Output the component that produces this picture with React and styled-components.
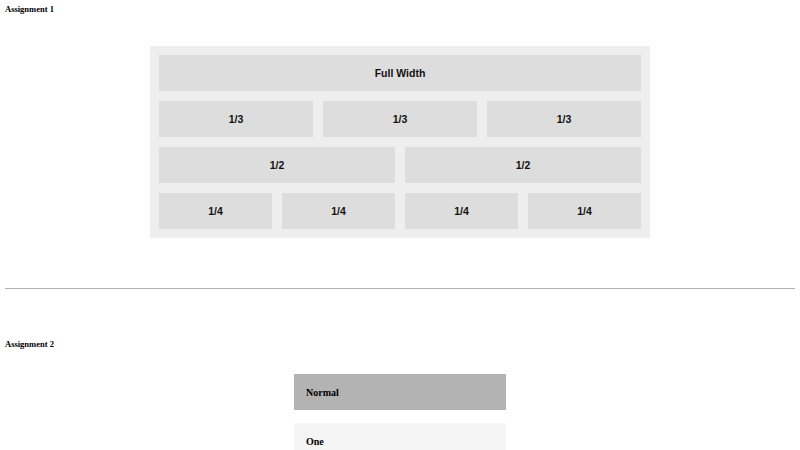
import React from 'react';
import styled, { createGlobalStyle } from 'styled-components';

const Global = createGlobalStyle`
  html, body {
    margin: 0;
    padding: 0;
    background: #fff;
    overflow: hidden;
  }
`;

const Page = styled.div`
  padding: 4px 5px 0;
  font-family: "Liberation Serif", "Times New Roman", serif;
`;

const Heading = styled.h3`
  margin: 0;
  font-size: 8.5px;
  line-height: 10px;
  font-weight: bold;
  color: #000;
`;

const Layout = styled.div`
  width: 500px;
  box-sizing: border-box;
  margin: 32px auto 0;
  padding: 9px;
  background: #eeeeee;
  display: grid;
  grid-template-columns: repeat(12, 1fr);
  gap: 10px;
`;

const Cell = styled.div`
  grid-column: span ${p => p.$span};
  height: 36px;
  background: #dddddd;
  display: flex;
  align-items: center;
  justify-content: center;
  font-family: "Liberation Sans", Arial, sans-serif;
  font-weight: bold;
  font-size: 10.5px;
  color: #111;
`;

const Rule = styled.hr`
  margin: 50px 0 50px;
  border: 0;
  border-top: 1px solid #b0b0b0;
  height: 0;
`;

const Stack = styled.div`
  width: 212px;
  margin: 25px auto 0;
  display: flex;
  flex-direction: column;
  gap: 13px;
`;

const Item = styled.div`
  height: 36px;
  box-sizing: border-box;
  padding-left: 12px;
  display: flex;
  align-items: center;
  background: ${p => (p.$active ? '#b3b3b3' : '#f5f5f5')};
  font-size: 10px;
  font-weight: bold;
  color: #000;
`;

const rows = [
  [12, 'Full Width'],
  [4, '1/3'], [4, '1/3'], [4, '1/3'],
  [6, '1/2'], [6, '1/2'],
  [3, '1/4'], [3, '1/4'], [3, '1/4'], [3, '1/4'],
];

export default function App() {
  return (
    <Page>
      <Global />
      <Heading>Assignment 1</Heading>
      <Layout>
        {rows.map(([span, label], i) => (
          <Cell key={i} $span={span}>{label}</Cell>
        ))}
      </Layout>
      <Rule />
      <Heading>Assignment 2</Heading>
      <Stack>
        <Item $active>Normal</Item>
        <Item>One</Item>
      </Stack>
    </Page>
  );
}
